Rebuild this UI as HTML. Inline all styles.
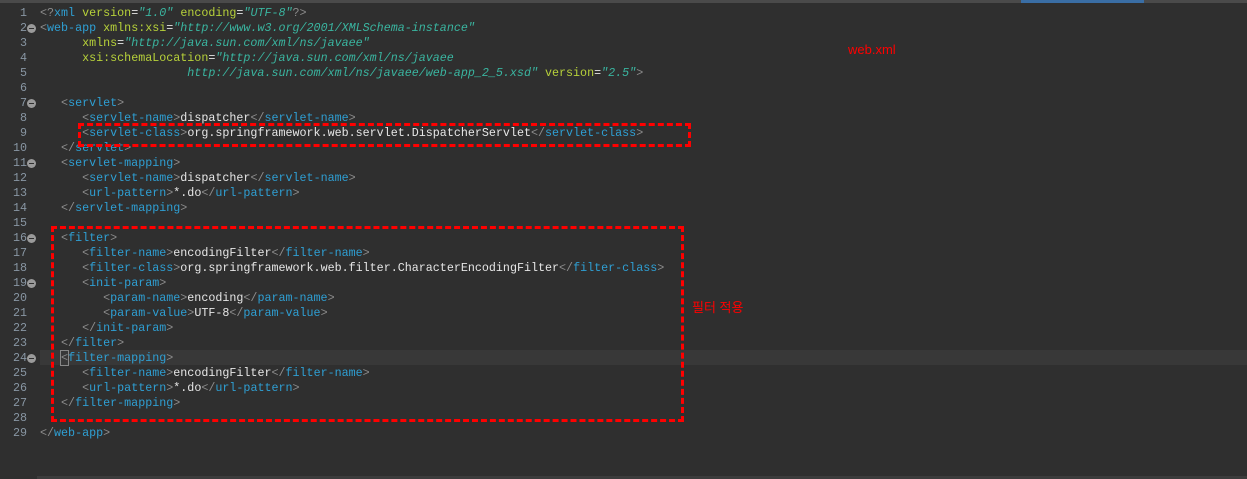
<!DOCTYPE html>
<html><head><meta charset="utf-8"><style>
html,body{margin:0;padding:0;}
body{width:1247px;height:479px;background:#2f2f2f;position:relative;overflow:hidden;font-family:"Liberation Mono",monospace;}
.top{position:absolute;left:0;top:0;width:1247px;height:3px;background:#4a4a4a;}
.topb{position:absolute;left:1021px;top:0;width:123px;height:3px;background:#3a6ea5;}
.bot{position:absolute;left:37px;top:476px;width:1210px;height:3px;background:#3c3c3c;}
.cur{position:absolute;left:40px;top:350px;width:1207px;height:15px;background:#383838;}
.ln{position:absolute;left:0;width:27px;text-align:right;color:#8896a3;font-size:11.7px;line-height:15px;}
.l{position:absolute;left:40px;white-space:pre;font-size:11.7px;line-height:15px;color:#e6e6e6;}
.b{color:#8c8c8c}.t{color:#2f9fd3}.a{color:#b7d13a}.s{color:#3ab5a0;font-style:italic}
.f{position:absolute;left:27px;width:9px;height:9px;border-radius:50%;background:#9a9a9a;}
.f:after{content:"";position:absolute;left:2px;top:4px;width:5px;height:1px;background:#2f2f2f;}
.box{position:absolute;border:3px dashed #f00;}
.lab{position:absolute;color:#f00;font-family:"Liberation Sans","Noto Sans CJK KR",sans-serif;font-size:13px;}
</style></head><body>
<div class="top"></div><div class="topb"></div><div class="cur"></div><div class="bot"></div>
<div class="ln" style="top:6px">1</div><div class="ln" style="top:21px">2</div><div class="ln" style="top:36px">3</div><div class="ln" style="top:51px">4</div><div class="ln" style="top:66px">5</div><div class="ln" style="top:81px">6</div><div class="ln" style="top:96px">7</div><div class="ln" style="top:111px">8</div><div class="ln" style="top:126px">9</div><div class="ln" style="top:141px">10</div><div class="ln" style="top:156px">11</div><div class="ln" style="top:171px">12</div><div class="ln" style="top:186px">13</div><div class="ln" style="top:201px">14</div><div class="ln" style="top:216px">15</div><div class="ln" style="top:231px">16</div><div class="ln" style="top:246px">17</div><div class="ln" style="top:261px">18</div><div class="ln" style="top:276px">19</div><div class="ln" style="top:291px">20</div><div class="ln" style="top:306px">21</div><div class="ln" style="top:321px">22</div><div class="ln" style="top:336px">23</div><div class="ln" style="top:351px">24</div><div class="ln" style="top:366px">25</div><div class="ln" style="top:381px">26</div><div class="ln" style="top:396px">27</div><div class="ln" style="top:411px">28</div><div class="ln" style="top:426px">29</div>
<div class="f" style="top:24px"></div><div class="f" style="top:99px"></div><div class="f" style="top:159px"></div><div class="f" style="top:234px"></div><div class="f" style="top:279px"></div><div class="f" style="top:354px"></div>
<div class="l" style="top:6px"><span class="b">&lt;?</span><span class="t">xml</span> <span class="a">version</span>=<span class="s">"1.0"</span> <span class="a">encoding</span>=<span class="s">"UTF-8"</span><span class="b">?&gt;</span></div>
<div class="l" style="top:21px"><span class="b">&lt;</span><span class="t">web-app</span> <span class="a">xmlns:xsi</span>=<span class="s">"http://www.w3.org/2001/XMLSchema-instance"</span></div>
<div class="l" style="top:36px">      <span class="a">xmlns</span>=<span class="s">"http://java.sun.com/xml/ns/javaee"</span></div>
<div class="l" style="top:51px">      <span class="a">xsi:schemaLocation</span>=<span class="s">"http://java.sun.com/xml/ns/javaee</span></div>
<div class="l" style="top:66px"><span class="s">                     http://java.sun.com/xml/ns/javaee/web-app_2_5.xsd"</span> <span class="a">version</span>=<span class="s">"2.5"</span><span class="b">&gt;</span></div>
<div class="l" style="top:96px">   <span class="b">&lt;</span><span class="t">servlet</span><span class="b">&gt;</span></div>
<div class="l" style="top:111px">      <span class="b">&lt;</span><span class="t">servlet-name</span><span class="b">&gt;</span>dispatcher<span class="b">&lt;/</span><span class="t">servlet-name</span><span class="b">&gt;</span></div>
<div class="l" style="top:126px">      <span class="b">&lt;</span><span class="t">servlet-class</span><span class="b">&gt;</span>org.springframework.web.servlet.DispatcherServlet<span class="b">&lt;/</span><span class="t">servlet-class</span><span class="b">&gt;</span></div>
<div class="l" style="top:141px">   <span class="b">&lt;/</span><span class="t">servlet</span><span class="b">&gt;</span></div>
<div class="l" style="top:156px">   <span class="b">&lt;</span><span class="t">servlet-mapping</span><span class="b">&gt;</span></div>
<div class="l" style="top:171px">      <span class="b">&lt;</span><span class="t">servlet-name</span><span class="b">&gt;</span>dispatcher<span class="b">&lt;/</span><span class="t">servlet-name</span><span class="b">&gt;</span></div>
<div class="l" style="top:186px">      <span class="b">&lt;</span><span class="t">url-pattern</span><span class="b">&gt;</span>*.do<span class="b">&lt;/</span><span class="t">url-pattern</span><span class="b">&gt;</span></div>
<div class="l" style="top:201px">   <span class="b">&lt;/</span><span class="t">servlet-mapping</span><span class="b">&gt;</span></div>
<div class="l" style="top:231px">   <span class="b">&lt;</span><span class="t">filter</span><span class="b">&gt;</span></div>
<div class="l" style="top:246px">      <span class="b">&lt;</span><span class="t">filter-name</span><span class="b">&gt;</span>encodingFilter<span class="b">&lt;/</span><span class="t">filter-name</span><span class="b">&gt;</span></div>
<div class="l" style="top:261px">      <span class="b">&lt;</span><span class="t">filter-class</span><span class="b">&gt;</span>org.springframework.web.filter.CharacterEncodingFilter<span class="b">&lt;/</span><span class="t">filter-class</span><span class="b">&gt;</span></div>
<div class="l" style="top:276px">      <span class="b">&lt;</span><span class="t">init-param</span><span class="b">&gt;</span></div>
<div class="l" style="top:291px">         <span class="b">&lt;</span><span class="t">param-name</span><span class="b">&gt;</span>encoding<span class="b">&lt;/</span><span class="t">param-name</span><span class="b">&gt;</span></div>
<div class="l" style="top:306px">         <span class="b">&lt;</span><span class="t">param-value</span><span class="b">&gt;</span>UTF-8<span class="b">&lt;/</span><span class="t">param-value</span><span class="b">&gt;</span></div>
<div class="l" style="top:321px">      <span class="b">&lt;/</span><span class="t">init-param</span><span class="b">&gt;</span></div>
<div class="l" style="top:336px">   <span class="b">&lt;/</span><span class="t">filter</span><span class="b">&gt;</span></div>
<div class="l" style="top:351px">   <span class="b" style="outline:1px solid #888">&lt;</span><span class="t">filter-mapping</span><span class="b">&gt;</span></div>
<div class="l" style="top:366px">      <span class="b">&lt;</span><span class="t">filter-name</span><span class="b">&gt;</span>encodingFilter<span class="b">&lt;/</span><span class="t">filter-name</span><span class="b">&gt;</span></div>
<div class="l" style="top:381px">      <span class="b">&lt;</span><span class="t">url-pattern</span><span class="b">&gt;</span>*.do<span class="b">&lt;/</span><span class="t">url-pattern</span><span class="b">&gt;</span></div>
<div class="l" style="top:396px">   <span class="b">&lt;/</span><span class="t">filter-mapping</span><span class="b">&gt;</span></div>
<div class="l" style="top:426px"><span class="b">&lt;/</span><span class="t">web-app</span><span class="b">&gt;</span></div>
<div class="box" style="left:78px;top:123px;width:607px;height:18px"></div>
<div class="box" style="left:51px;top:226px;width:627px;height:190px"></div>
<div class="lab" style="left:848px;top:42px">web.xml</div>
<div class="lab" style="left:692px;top:297px">필터 적용</div>
</body></html>
